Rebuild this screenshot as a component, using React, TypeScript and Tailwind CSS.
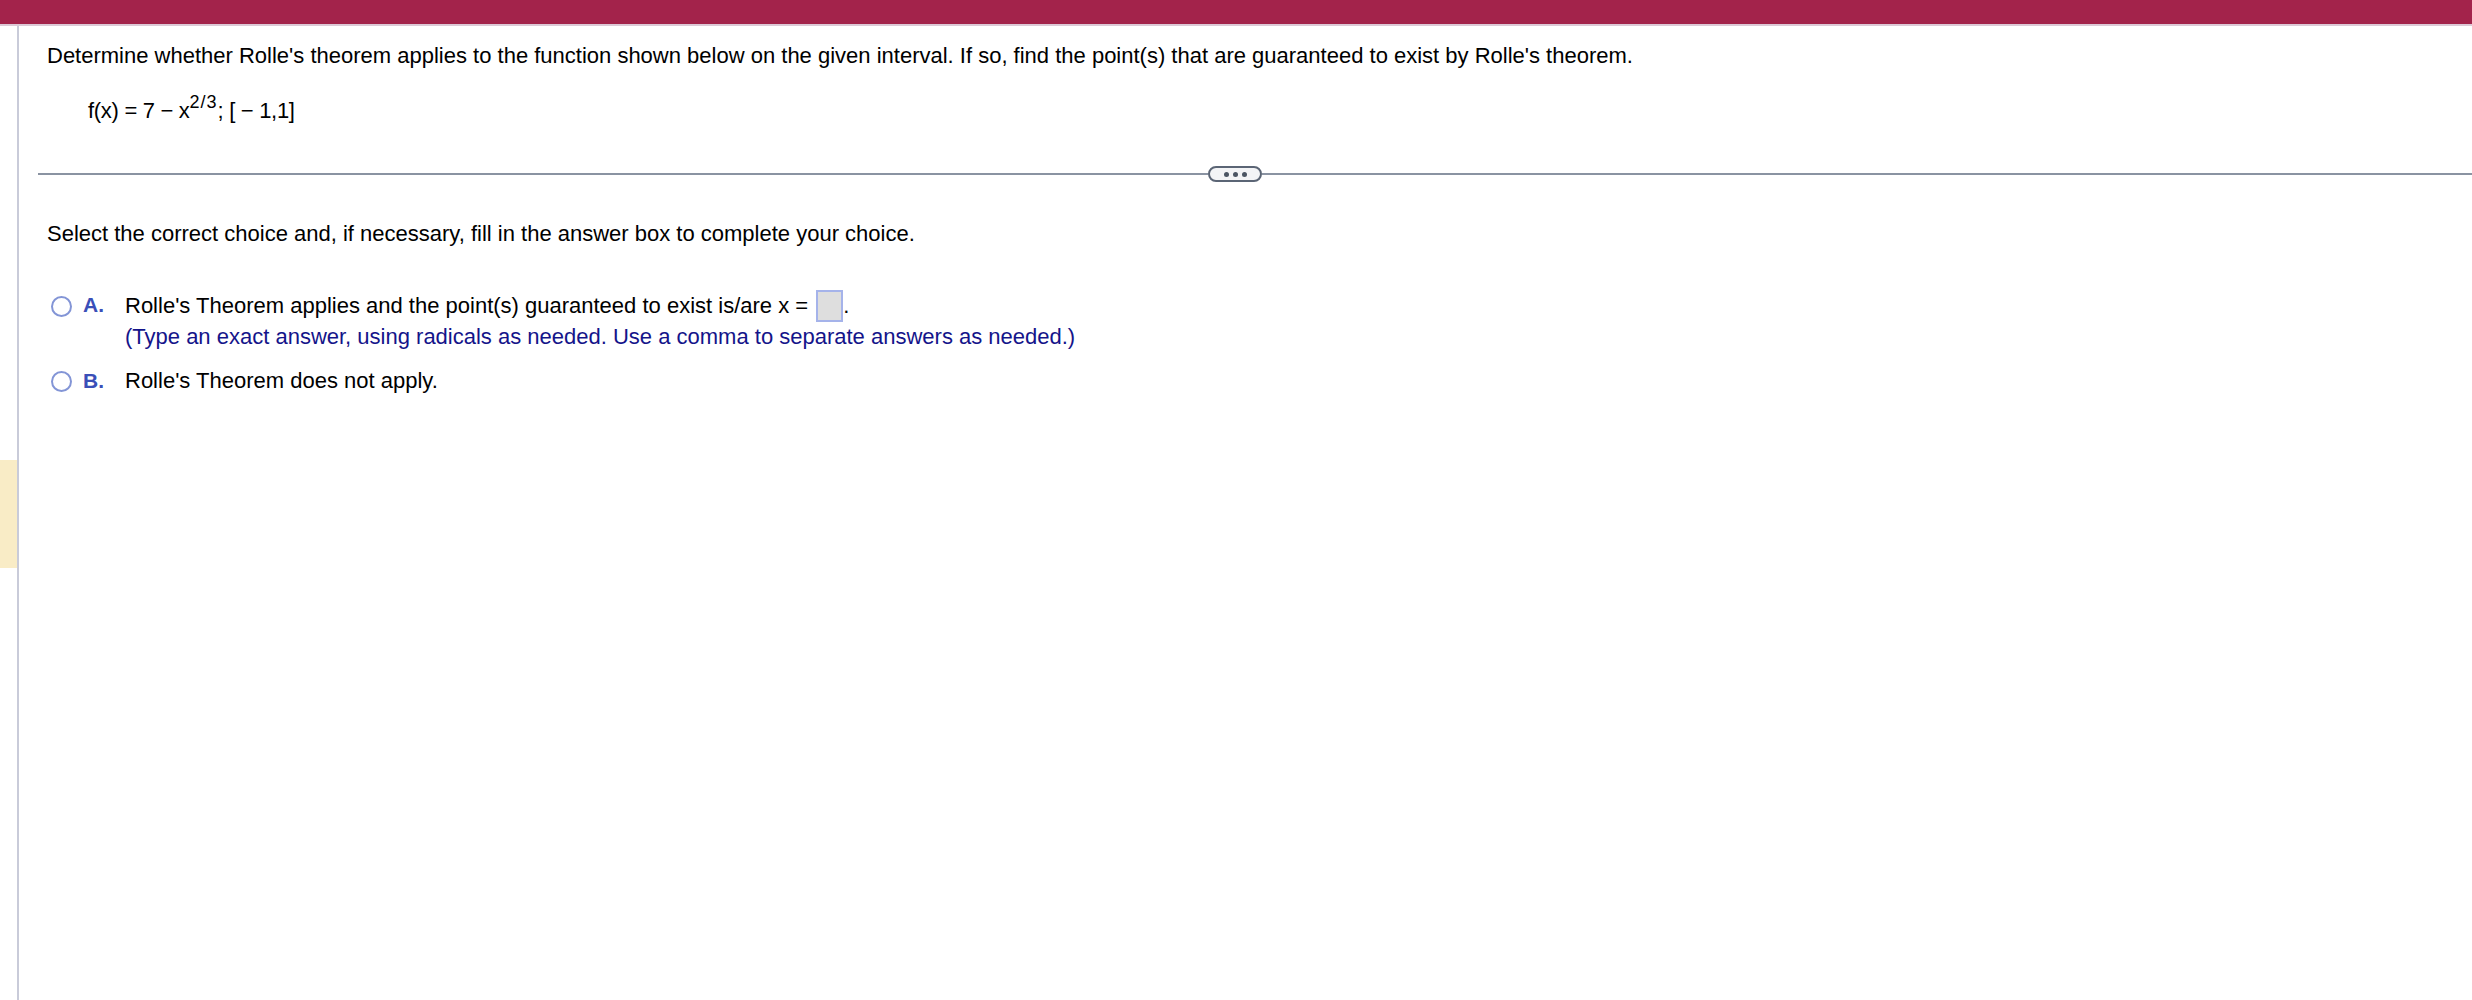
import React from "react";

function Radio() {
  return (
    <span className="inline-block w-[21px] h-[21px] rounded-full border-2 border-[#8395d6] bg-white shrink-0" />
  );
}

export default function App() {
  return (
    <div className="w-[2472px] h-[1000px] bg-white overflow-hidden text-black" style={{ fontFamily: '"Liberation Sans", Arial, sans-serif' }}>
      <div className="h-[24px] bg-[#a3234b]" />
      <div className="h-[2px] bg-[#dcc9d6]" />
      <div className="flex h-[974px]">
        <div className="w-[17px] shrink-0 flex flex-col">
          <div className="mt-[434px] h-[108px] bg-[#f9ecc6]" />
        </div>
        <div className="flex-1 border-l-2 border-[#c9cbd9] flex flex-col text-[22px] leading-[26px]">
          <div className="pl-[28px] pt-[17px]">
            Determine whether Rolle's theorem applies to the function shown below on the given interval. If so, find the point(s) that are guaranteed to exist by Rolle's theorem.
          </div>
          <div className="pl-[69px] mt-[29px] tracking-[-0.3px]">
            f(x) = 7 − x<sup className="text-[18px] top-[-10px] tracking-[1px]">2/3</sup>; [ − 1,1]
          </div>
          <div className="mt-[42px] ml-[19px] flex items-center h-[16px]">
            <div className="w-[1170px] h-[2px] bg-[#8a93a2]" />
            <div className="w-[54px] h-[16px] rounded-full border-2 border-[#5b6575] bg-[#f3f4f6] flex items-center justify-center gap-[4px]">
              <span className="w-[5px] h-[5px] rounded-full bg-[#4b5563]" />
              <span className="w-[5px] h-[5px] rounded-full bg-[#4b5563]" />
              <span className="w-[5px] h-[5px] rounded-full bg-[#4b5563]" />
            </div>
            <div className="flex-1 h-[2px] bg-[#8a93a2]" />
          </div>
          <div className="pl-[28px] mt-[39px]">
            Select the correct choice and, if necessary, fill in the answer box to complete your choice.
          </div>
          <div className="pl-[32px] mt-[43px] flex items-start">
            <div className="flex items-center h-[32px]">
              <Radio />
            </div>
            <div className="w-[53px] pl-[11px] h-[32px] flex items-center font-bold text-[#3a4fb8] text-[21px] pb-[3px]">A.</div>
            <div className="flex flex-col">
              <div className="flex items-center h-[32px]">
                <span>Rolle's Theorem applies and the point(s) guaranteed to exist is/are x =</span>
                <span className="ml-[8px] inline-block w-[27px] h-[32px] bg-[#dedede] border-2 border-[#a5b3ea]" />
                <span>.</span>
              </div>
              <div className="text-[#14148a] mt-[2px]">(Type an exact answer, using radicals as needed. Use a comma to separate answers as needed.)</div>
            </div>
          </div>
          <div className="pl-[32px] mt-[18px] flex items-center h-[26px]">
            <Radio />
            <div className="w-[53px] pl-[11px] font-bold text-[#3a4fb8] text-[21px]">B.</div>
            <div>Rolle's Theorem does not apply.</div>
          </div>
        </div>
      </div>
    </div>
  );
}
